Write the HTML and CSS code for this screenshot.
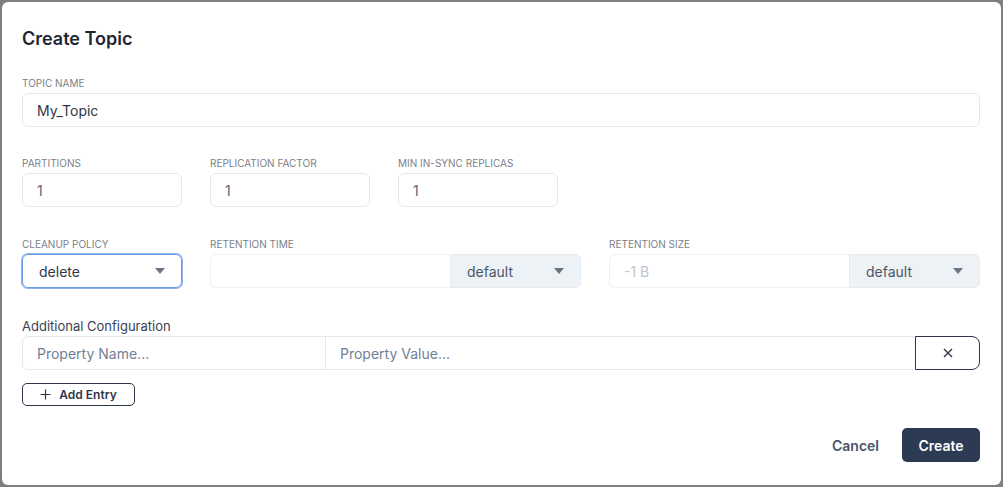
FILE: index.html
```html
<!DOCTYPE html>
<html lang="en">
<head>
    <meta charset="UTF-8">
    <title>Create Topic</title>
    <link rel="stylesheet" href="styles.css">
</head>
<body>
    <div class="modal">
        <h2 class="modal-title">Create Topic</h2>

        <div class="field">
            <label class="label">Topic Name</label>
            <div class="input">My_Topic</div>
        </div>

        <div class="row row-three">
            <div class="field">
                <label class="label">Partitions</label>
                <div class="input num">1</div>
            </div>
            <div class="field">
                <label class="label">Replication Factor</label>
                <div class="input num">1</div>
            </div>
            <div class="field">
                <label class="label">Min In-Sync Replicas</label>
                <div class="input num">1</div>
            </div>
        </div>

        <div class="row row-policy">
            <div class="field">
                <label class="label">Cleanup Policy</label>
                <div class="select focused">
                    <span>delete</span>
                    <span class="caret"></span>
                </div>
            </div>
            <div class="field">
                <label class="label">Retention Time</label>
                <div class="group">
                    <div class="input group-input"></div>
                    <div class="select addon">
                        <span>default</span>
                        <span class="caret"></span>
                    </div>
                </div>
            </div>
            <div class="field">
                <label class="label">Retention Size</label>
                <div class="group">
                    <div class="input group-input placeholder-light">-1 B</div>
                    <div class="select addon">
                        <span>default</span>
                        <span class="caret"></span>
                    </div>
                </div>
            </div>
        </div>

        <div class="config">
            <div class="config-label">Additional Configuration</div>
            <div class="config-row">
                <div class="config-cell placeholder">Property Name...</div>
                <div class="config-cell value placeholder">Property Value...</div>
                <button class="remove-btn">
                    <svg width="10" height="10" viewBox="0 0 10 10"><path d="M1 1 L9 9 M9 1 L1 9" stroke="#2d3748" stroke-width="1.4" fill="none"/></svg>
                </button>
            </div>
            <button class="add-btn">
                <svg width="11" height="11" viewBox="0 0 11 11"><path d="M5.5 0.5 V10.5 M0.5 5.5 H10.5" stroke="#2d3748" stroke-width="1.2" fill="none"/></svg>
                Add Entry
            </button>
        </div>

        <div class="footer">
            <button class="btn-ghost">Cancel</button>
            <button class="btn-solid">Create</button>
        </div>
    </div>
</body>
</html>
```

FILE: styles.css
```css
* {
    margin: 0;
    padding: 0;
    box-sizing: border-box;
    font-family: 'Inter', 'Liberation Sans', sans-serif;
}

body {
    background: #7f7f7f;
    height: 487px;
    overflow: hidden;
}

.modal {
    margin: 2px 2px 0 2px;
    height: 483px;
    background: #fff;
    border-radius: 6px;
    padding: 25px 21px 23px 20px;
    display: flex;
    flex-direction: column;
}

.modal-title {
    font-size: 18px;
    line-height: 24px;
    font-weight: 600;
    color: #1f2633;
    margin-bottom: 26px;
}

.label {
    display: block;
    font-size: 10px;
    line-height: 12px;
    text-transform: uppercase;
    color: #7b8089;
    margin-bottom: 4px;
}

.input {
    height: 34px;
    border: 1px solid #e2e8f0;
    border-radius: 6px;
    padding: 0 14px;
    display: flex;
    align-items: center;
    font-size: 14px;
    color: #2d3748;
}

.num {
    color: #5c6778;
}

.row {
    display: grid;
    gap: 28px;
    margin-top: 30px;
}

.row-three {
    grid-template-columns: 160px 160px 160px;
}

.row-policy {
    grid-template-columns: 160px 1fr 1fr;
    margin-top: 31px;
}

.select {
    height: 34px;
    border: 1px solid #e2e8f0;
    border-radius: 6px;
    padding: 0 16px 0 16px;
    display: flex;
    align-items: center;
    justify-content: space-between;
    font-size: 14px;
    color: #2d3748;
}

.select.focused {
    border-color: #6b9de6;
    box-shadow: 0 0 0 1px #8db3ec;
}

.caret {
    width: 0;
    height: 0;
    border-left: 5px solid transparent;
    border-right: 5px solid transparent;
    border-top: 6px solid #6b7485;
}

.group {
    display: flex;
}

.group-input {
    flex: 1;
    border-color: #edf1f6;
    border-radius: 6px 0 0 6px;
    border-right: none;
}

.placeholder-light {
    color: #bfc5ce;
}

.addon {
    width: 131px;
    background: #edf2f7;
    border-color: #e6ebf1;
    border-radius: 0 6px 6px 0;
    color: #4a5568;
}

.config {
    margin-top: 30px;
}

.config-label {
    font-size: 13px;
    line-height: 16px;
    color: #3a4250;
    margin-bottom: 2px;
}

.config-row {
    display: flex;
    height: 34px;
}

.config-cell {
    border: 1px solid #e2e8f0;
    display: flex;
    align-items: center;
    padding: 0 14px;
    font-size: 14px;
}

.config-cell:first-child {
    width: 304px;
    border-radius: 6px 0 0 6px;
}

.config-cell.value {
    flex: 1;
    border-left: none;
    border-right: none;
}

.placeholder {
    color: #718096;
}

.remove-btn {
    width: 65px;
    border: 1px solid #2d3748;
    border-radius: 0 8px 8px 0;
    background: #fff;
    display: flex;
    align-items: center;
    justify-content: center;
}

.add-btn {
    margin-top: 13px;
    width: 113px;
    height: 23px;
    border: 1px solid #2d3748;
    border-radius: 5px;
    background: #fff;
    display: flex;
    align-items: center;
    justify-content: center;
    gap: 8px;
    font-size: 12px;
    font-weight: 600;
    color: #2d3748;
}

.footer {
    margin-top: auto;
    display: flex;
    justify-content: flex-end;
    align-items: center;
    gap: 7px;
}

.btn-ghost {
    background: none;
    border: none;
    padding: 0 16px;
    height: 34px;
    font-size: 14px;
    font-weight: 600;
    color: #4a5568;
}

.btn-solid {
    width: 78px;
    height: 34px;
    border: none;
    border-radius: 5px;
    background: #2c3a54;
    color: #fff;
    font-size: 14px;
    font-weight: 600;
}
```
